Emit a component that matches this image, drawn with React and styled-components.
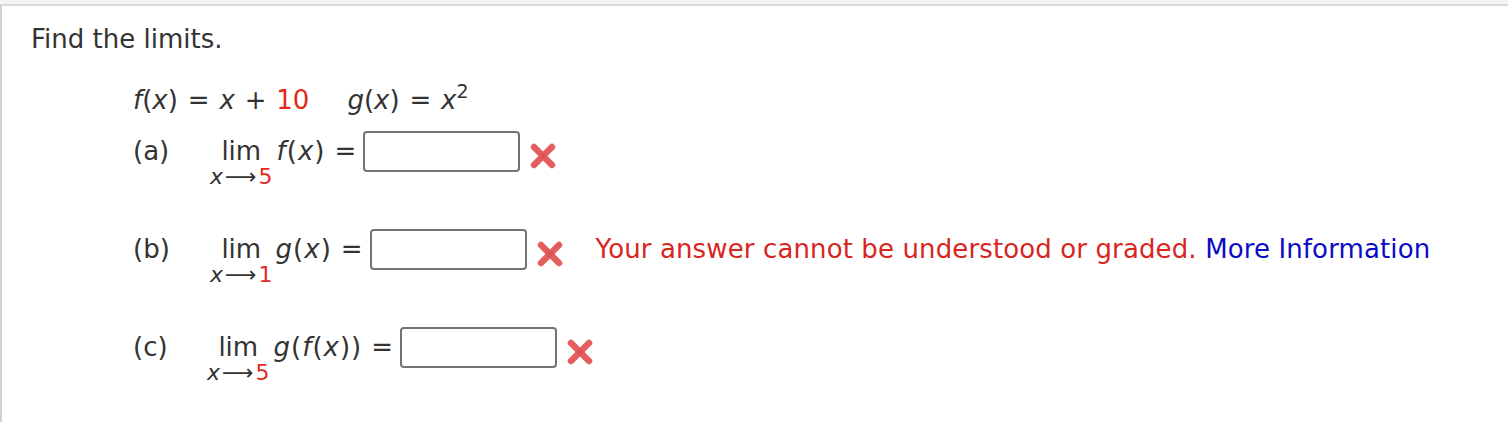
import React from 'react';
import styled, { createGlobalStyle } from 'styled-components';

const GlobalStyle = createGlobalStyle`
    html, body {
        margin: 0;
        padding: 0;
        background: #f4f4f4;
    }
    body {
        font-family: "DejaVu Sans", Verdana, sans-serif;
        color: #333333;
    }
`;

const Page = styled.div`
    padding-top: 4px;
    height: 422px;
    box-sizing: border-box;
`;

const Panel = styled.div`
    background: #ffffff;
    border-top: 2px solid #dadada;
    border-left: 2px solid #d2d2d2;
    height: 418px;
    box-sizing: border-box;
    padding: 18px 0 0 29px;
`;

const Prompt = styled.div`
    font-size: 26px;
    line-height: 30px;
`;

const Body = styled.div`
    padding-left: 102px;
    padding-top: 31px;
`;

const Defs = styled.div`
    display: flex;
    align-items: baseline;
    gap: 38px;
    font-size: 26px;
    line-height: 30px;
    white-space: pre;
    word-spacing: 1.6px;
`;

const Var = styled.span`
    font-style: italic;
`;

const Num = styled.span`
    color: #e22a1b;
`;

const Sup = styled.sup`
    font-size: 19px;
    vertical-align: 11px;
    line-height: 0;
`;

const Part = styled.div`
    display: flex;
    align-items: baseline;
    font-size: 26px;
    height: 98px;
    margin-top: ${({ $first }) => ($first ? '19px' : '0')};
`;

const Label = styled.span`
    width: ${({ $w }) => $w}px;
    flex: none;
    padding-top: 2px;
`;

const Limit = styled.span`
    display: inline-flex;
    flex-direction: column;
    align-items: center;
    margin-right: ${({ $gap }) => $gap}px;
`;

const LimWord = styled.span`
    line-height: 30px;
`;

const Under = styled.span`
    font-size: 22px;
    line-height: 22px;
    white-space: nowrap;
`;

const Arrow = styled.span`
    margin: 0 2px;
`;

const Expr = styled.span`
    white-space: nowrap;
    letter-spacing: 1px;
`;

const Equals = styled.span`
    margin: 0 7px 0 9px;
`;

const Answer = styled.input`
    width: 157px;
    height: 41px;
    box-sizing: border-box;
    border: 2px solid #737373;
    border-radius: 4px;
    background: #fff;
    align-self: flex-start;
    margin: -3px 0 0 0;
    padding: 0;
    outline: none;
`;

const Mark = styled.svg`
    width: 28px;
    height: 28px;
    margin-left: 9px;
    align-self: flex-start;
    margin-top: 8px;
    filter: blur(0.5px);
    flex: none;
`;

const Feedback = styled.span`
    margin-left: 32px;
    color: #d7261e;
    font-size: 26px;
    white-space: nowrap;
    letter-spacing: 0.12px;
`;

const MoreInfo = styled.a`
    color: #0b0bc4;
    text-decoration: none;
`;

const Cross = () => (
    <Mark viewBox="0 0 28 28">
        <g stroke="#e45e5e" strokeWidth="6.5" strokeLinecap="round">
            <line x1="5" y1="5" x2="23" y2="23" />
            <line x1="23" y1="5" x2="5" y2="23" />
        </g>
        <rect x="11.5" y="11.5" width="5" height="5" fill="#d64646" opacity="0.5" />
    </Mark>
);

const parts = [
    { label: '(a)', to: '5', expr: <><Var>f</Var>(<Var>x</Var>)</>, labelW: 77, gap: 4 },
    { label: '(b)', to: '1', expr: <><Var>g</Var>(<Var>x</Var>)</>, labelW: 77, gap: 3, error: true },
    { label: '(c)', to: '5', expr: <><Var>g</Var>(<Var>f</Var>(<Var>x</Var>))</>, labelW: 74, gap: 4 },
];

export default function App() {
    return (
        <Page>
            <GlobalStyle />
            <Panel>
                <Prompt>Find the limits.</Prompt>
                <Body>
                    <Defs>
                        <span><Var>f</Var>(<Var>x</Var>) = <Var>x</Var> + <Num>10</Num></span>
                        <span><Var>g</Var>(<Var>x</Var>) = <Var>x</Var><Sup>2</Sup></span>
                    </Defs>
                    {parts.map((p, i) => (
                        <Part key={p.label} $first={i === 0}>
                            <Label $w={p.labelW}>{p.label}</Label>
                            <Limit $gap={p.gap}>
                                <LimWord>lim</LimWord>
                                <Under><Var>x</Var><Arrow>⟶</Arrow><Num>{p.to}</Num></Under>
                            </Limit>
                            <Expr>{p.expr}</Expr>
                            <Equals>=</Equals>
                            <Answer type="text" />
                            <Cross />
                            {p.error && (
                                <Feedback>
                                    Your answer cannot be understood or graded. <MoreInfo href="#">More Information</MoreInfo>
                                </Feedback>
                            )}
                        </Part>
                    ))}
                </Body>
            </Panel>
        </Page>
    );
}
